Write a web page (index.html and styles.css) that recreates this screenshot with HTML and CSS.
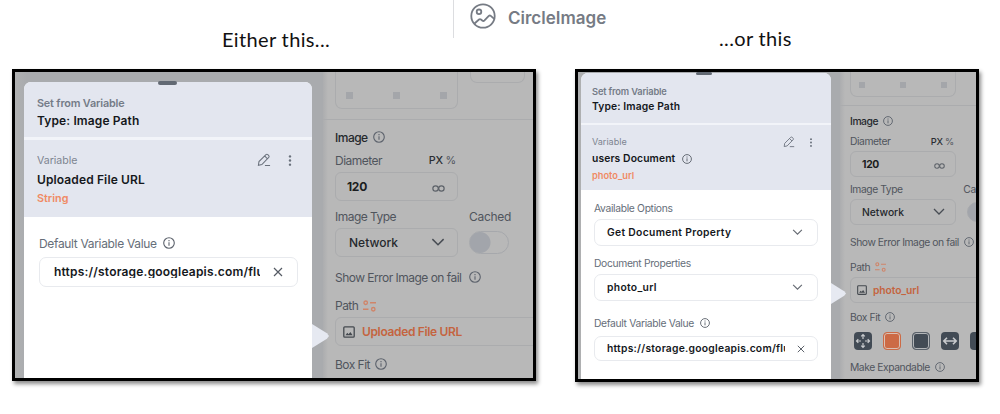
FILE: index.html
```
<!DOCTYPE html>
<html lang="en">
<head>
  <meta charset="UTF-8" />
  <meta name="viewport" content="width=device-width, initial-scale=1.0" />
  <title>CircleImage</title>
  <link rel="stylesheet" href="styles.css">
</head>
<body>
  <svg class="sprite">
    <symbol id="info" viewBox="0 0 12 12"><g fill="none" stroke="currentColor" stroke-width="1.1"><circle cx="6" cy="6" r="5.3"/><path d="M6 5.2v3.6M6 3v1.3"/></g></symbol>
    <symbol id="chevron" viewBox="0 0 12 8"><path d="M1 1l5 5 5-5" fill="none" stroke="currentColor" stroke-width="1.3"/></symbol>
    <symbol id="close" viewBox="0 0 10 10"><path d="M1 1l8 8M9 1L1 9" fill="none" stroke="currentColor" stroke-width="1.2"/></symbol>
    <symbol id="pencil" viewBox="0 0 15 15"><path d="M1.5 13.2l.6-4L9.6 1.7q1-.8 2 0l1 1q.9 1 0 2L5.2 12.4l-3.7.8zM8.2 3.2l3 3M8.5 13.3H14" fill="none" stroke="currentColor" stroke-width="1.1"/></symbol>
    <symbol id="more" viewBox="0 0 4 12"><g fill="currentColor"><circle cx="2" cy="1.5" r="1.3"/><circle cx="2" cy="6" r="1.3"/><circle cx="2" cy="10.5" r="1.3"/></g></symbol>
    <symbol id="infinity" viewBox="0 0 12 8"><g fill="none" stroke="currentColor" stroke-width="1.1"><circle cx="3.3" cy="4" r="2.5"/><circle cx="8.7" cy="4" r="2.5"/></g></symbol>
    <symbol id="binding" viewBox="0 0 12 11"><g fill="none" stroke="currentColor" stroke-width="1.2"><circle cx="2.5" cy="2.5" r="1.6"/><path d="M6.500 2.500H12M0 8.500h5"/><circle cx="9.500" cy="8.500" r="1.600"/></g></symbol>
    <symbol id="picture" viewBox="0 0 12 12"><rect x=".8" y=".8" width="10.400" height="10.400" rx="1" fill="none" stroke="currentColor" stroke-width="1.300"/><path d="M2.500 9.300l1.800-2.500 1.300 1.400 1.800-2.300 2.200 3.400z" fill="currentColor"/></symbol>
    <symbol id="arrows" viewBox="0 0 18 18"><g fill="none" stroke="currentColor" stroke-width="1.200"><path d="M9 2.500V7M9 11v4.500M2.500 9H7M11 9h4.500M7.200 4.300L9 2.500l1.800 1.800M7.200 13.700L9 15.500l1.800-1.800M4.300 7.200L2.500 9l1.800 1.800M13.700 7.200L15.500 9l-1.800 1.800"/></g></symbol>
    <symbol id="width" viewBox="0 0 18 18"><path d="M3 9h12M6 5.800L2.800 9 6 12.200M12 5.800L15.200 9 12 12.200" fill="none" stroke="currentColor" stroke-width="1.600"/></symbol>
  </svg>

  <header class="top">
    <div class="caption caption-left">Either this...</div>
    <div class="widget">
      <svg class="widget-icon" viewBox="0 0 26 26"><g fill="none" stroke="currentColor" stroke-width="1.8"><circle cx="13" cy="13" r="11.7"/><circle cx="9" cy="8.8" r="2.3"/><path d="M4.500 20.500l4.500-4q1-.8 2 0l1.500 1.200q1 .7 2-.3l4.300-4.500q1-.8 2 0l3.400 3"/></g></svg>
      <span>CircleImage</span>
    </div>
    <div class="caption caption-right">...or this</div>
  </header>

  <main class="shots">
    <section class="shot shot-a">
      <div class="sheet">
        <div class="handle"></div>
        <div class="sheet-head">
          <div class="from"><span>Set from Variable</span></div>
          <div class="type"><span>Type: Image Path</span></div>
        </div>
        <div class="variable">
          <div class="variable-text">
            <div class="muted"><span>Variable</span></div>
            <div class="name"><span>Uploaded File URL</span></div>
            <div class="kind"><span>String</span></div>
          </div>
          <div class="actions">
            <svg class="pencil"><use href="#pencil"/></svg>
            <svg class="more"><use href="#more"/></svg>
          </div>
        </div>
        <div class="sheet-body">
          <div class="label default-label"><span>Default Variable Value</span><svg class="info"><use href="#info"/></svg></div>
          <div class="field url-field"><span class="url">https://storage.googleapis.com/flu</span><svg class="close"><use href="#close"/></svg></div>
        </div>
        <div class="pointer"></div>
      </div>

      <div class="props">
        <div class="align">
          <div class="align-box"><i></i><i></i><i></i></div>
          <div class="align-side"></div>
        </div>
        <div class="row title"><span>Image</span><svg class="info"><use href="#info"/></svg></div>
        <div class="row diameter"><span>Diameter</span><span class="units"><b>PX</b> %</span></div>
        <div class="box size"><span>120</span><svg class="infinity"><use href="#infinity"/></svg></div>
        <div class="row type-row"><span class="type-text">Image Type</span><span class="cached">Cached</span></div>
        <div class="type-line">
          <div class="box select"><span>Network</span><svg class="chevron"><use href="#chevron"/></svg></div>
          <div class="switch"></div>
        </div>
        <div class="row fail"><span>Show Error Image on fail</span><svg class="info"><use href="#info"/></svg></div>
        <div class="row path"><span>Path</span><svg class="binding"><use href="#binding"/></svg></div>
        <div class="box path-box"><svg class="picture"><use href="#picture"/></svg><span>Uploaded File URL</span></div>
        <div class="row fit"><span>Box Fit</span><svg class="info"><use href="#info"/></svg></div>
      </div>
    </section>

    <section class="shot shot-b">
      <div class="sheet">
        <div class="handle"></div>
        <div class="sheet-head">
          <div class="from"><span>Set from Variable</span></div>
          <div class="type"><span>Type: Image Path</span></div>
        </div>
        <div class="variable">
          <div class="variable-text">
            <div class="muted"><span>Variable</span></div>
            <div class="name"><span>users Document</span><svg class="info"><use href="#info"/></svg></div>
            <div class="kind"><span>photo_url</span></div>
          </div>
          <div class="actions">
            <svg class="pencil"><use href="#pencil"/></svg>
            <svg class="more"><use href="#more"/></svg>
          </div>
        </div>
        <div class="sheet-body">
          <div class="label"><span>Available Options</span></div>
          <div class="field select-field"><span>Get Document Property</span><svg class="chevron"><use href="#chevron"/></svg></div>
          <div class="label properties-label"><span>Document Properties</span></div>
          <div class="field select-field"><span>photo_url</span><svg class="chevron"><use href="#chevron"/></svg></div>
          <div class="label default-label"><span>Default Variable Value</span><svg class="info"><use href="#info"/></svg></div>
          <div class="field url-field"><span class="url">https://storage.googleapis.com/flu</span><svg class="close"><use href="#close"/></svg></div>
        </div>
        <div class="pointer"></div>
      </div>

      <div class="props">
        <div class="align">
          <div class="align-box"><i></i><i></i><i></i></div>
        </div>
        <div class="row title"><span>Image</span><svg class="info"><use href="#info"/></svg></div>
        <div class="row diameter"><span>Diameter</span><span class="units"><b>PX</b> %</span></div>
        <div class="box size"><span>120</span><svg class="infinity"><use href="#infinity"/></svg></div>
        <div class="row type-row"><span class="type-text">Image Type</span><span class="cached">Ca</span></div>
        <div class="type-line">
          <div class="box select"><span>Network</span><svg class="chevron"><use href="#chevron"/></svg></div>
          <div class="switch"></div>
        </div>
        <div class="row fail"><span>Show Error Image on fail</span><svg class="info"><use href="#info"/></svg></div>
        <div class="row path"><span>Path</span><svg class="binding"><use href="#binding"/></svg></div>
        <div class="box path-box"><svg class="picture"><use href="#picture"/></svg><span>photo_url</span></div>
        <div class="row fit"><span>Box Fit</span><svg class="info"><use href="#info"/></svg></div>
        <div class="fits">
          <div class="fit-btn"><svg><use href="#arrows"/></svg></div>
          <div class="fit-btn ring active"></div>
          <div class="fit-btn ring"></div>
          <div class="fit-btn"><svg><use href="#width"/></svg></div>
          <div class="fit-btn"></div>
        </div>
        <div class="row expand"><span>Make Expandable</span><svg class="info"><use href="#info"/></svg></div>
      </div>
    </section>
  </main>
</body>
</html>
```
FILE: styles.css
```
:root {
  --ink: #15181c;
  --muted: #6f7782;
  --orange: #f08a64;
  --lavender: #e3e6ef;
  --shade: #b8b8b8;
  --shade-line: #abacae;
}

* {
  box-sizing: border-box;
  margin: 0;
  padding: 0;
}

body {
  width: 1000px;
  height: 414px;
  overflow: hidden;
  background: #fff;
  font-family: Inter, 'Liberation Sans', sans-serif;
  color: var(--ink);
}

.sprite {
  display: none;
}

svg {
  display: block;
  flex: none;
}

span {
  white-space: nowrap;
}

/* captions */
.top {
  display: flex;
  height: 69px;
}

.caption {
  font: 20px/24px Lato, sans-serif;
  letter-spacing: 0.35px;
  color: #111;
  white-space: nowrap;
}

.caption-left {
  width: 453px;
  padding: 27px 0 0 222px;
}

.caption-right {
  padding-top: 26px;
}

.widget {
  display: flex;
  align-items: center;
  width: 266px;
  height: 38px;
  padding: 0 0 4px 17px;
  border-left: 1px solid #dcdde0;
  color: #767b84;
  font-size: 17px;
  font-weight: 600;
}

.widget-icon {
  width: 26px;
  height: 26px;
  margin: -2px 12px 0 -1px;
}

.widget span {
  padding-top: 2px;
}

/* screenshots */
.shots {
  display: flex;
  align-items: flex-start;
  gap: 39px;
  padding-left: 12px;
}

.shot {
  display: flex;
  overflow: hidden;
  border: 3px solid #000;
  background: linear-gradient(90deg, #b0b1b2, #a9abae 12px);
  box-shadow: 2px 3px 4px rgba(0, 0, 0, 0.45);
}

.shot-a {
  width: 524px;
  height: 312px;
  padding-left: 9px;
  font-size: 12px;
}

.shot-b {
  width: 404px;
  height: 313px;
  padding-left: 3px;
  font-size: 10.3px;
}

.sheet {
  position: relative;
  flex: none;
  border-radius: 7px 7px 0 0;
  background: #fff;
}

.shot-a .sheet {
  width: 288px;
  margin-top: 10px;
}

.shot-b .sheet {
  width: 250px;
  margin-top: 1px;
}

.handle {
  position: absolute;
  top: -1px;
  left: 50%;
  width: 19px;
  height: 4px;
  margin-left: -10px;
  border-radius: 2px;
  background: #626973;
}

.shot-b .handle {
  width: 16px;
  height: 3px;
}

.pointer {
  position: absolute;
  left: 100%;
  width: 17px;
  height: 24px;
  background: #e6e9f1;
  clip-path: polygon(0 0, 88% 39%, 100% 50%, 88% 61%, 0 100%);
}

.shot-a .pointer {
  top: 242px;
}

.shot-b .pointer {
  top: 210px;
  width: 15px;
  height: 21px;
}

.sheet-head {
  border-bottom: 3px solid #f2f4f9;
  border-radius: 7px 7px 0 0;
  background: var(--lavender);
}

.shot-a .sheet-head {
  height: 58px;
  padding: 13px 13px 0;
  line-height: 17px;
}

.shot-b .sheet-head {
  height: 52px;
  padding: 11px 11px 0;
  border-bottom-width: 2px;
  line-height: 15px;
}

.from {
  color: #747b87;
  font-size: 0.9em;
  font-weight: 600;
  letter-spacing: -0.15px;
}

.type,
.name {
  font-weight: 600;
  letter-spacing: 0.12px;
}

.variable {
  display: flex;
  justify-content: space-between;
  background: var(--lavender);
}

.shot-a .variable {
  height: 77px;
  padding: 11px 20px 0 13px;
  line-height: 19px;
}

.shot-b .variable {
  height: 65px;
  padding: 8px 18px 0 11px;
  line-height: 17px;
}

.name {
  display: flex;
  align-items: center;
  gap: 7px;
}

.muted {
  color: #7d848f;
  font-size: 0.88em;
}

.kind {
  color: var(--orange);
  font-size: 0.9em;
  font-weight: 600;
}

.actions {
  display: flex;
  align-items: center;
  height: 18px;
  color: #6a717c;
}

.pencil {
  width: 14px;
  height: 14px;
  margin-right: 17px;
}

.more {
  width: 4px;
  height: 11px;
}

.shot-b .pencil {
  width: 12px;
  height: 12px;
  margin-right: 14px;
}

.shot-b .more {
  height: 9px;
}

.info {
  width: 12px;
  height: 12px;
  color: #5c626c;
}

.shot-b .info {
  width: 10px;
  height: 10px;
}

.sheet-body {
  padding: 14px 14px 0 15px;
}

.shot-b .sheet-body {
  padding: 8px 13px 0;
}

.label {
  display: flex;
  align-items: center;
  gap: 6px;
  height: 26px;
  padding-bottom: 2px;
  color: #666e79;
  letter-spacing: -0.33px;
}

.shot-b .label {
  height: 21px;
}

.field {
  display: flex;
  align-items: center;
  justify-content: space-between;
  height: 30px;
  padding: 0 14px 0 14px;
  border: 1px solid #e8eaee;
  border-radius: 7px;
  font-weight: 600;
}

.shot-b .field {
  height: 27px;
  padding: 0 14px 1px 12px;
  letter-spacing: 0.33px;
}

.shot-b .properties-label {
  margin-top: 7px;
}

.shot-b .default-label {
  margin-top: 12px;
}

.shot-b .url-field {
  height: 25px;
  margin-top: 2px;
  padding: 0 12px;
}

.field .chevron {
  width: 11px;
  height: 7px;
  color: #666b73;
}

/* the value is cut just below the baseline */
.url {
  width: 206px;
  height: 12px;
  overflow: hidden;
  line-height: 11px;
  letter-spacing: 0.2px;
}

.shot-b .url {
  width: 178px;
  height: 10px;
  line-height: 9px;
  letter-spacing: 0.25px;
}

.close {
  width: 10px;
  height: 10px;
  color: #555b64;
}

.shot-b .close {
  width: 8px;
  height: 8px;
}

/* property panel */
.props {
  flex: 1;
  min-width: 0;
  overflow: hidden;
  background: linear-gradient(90deg, #acadaf, var(--shade) 5px);
  color: #50555d;
}

.shot-a .props {
  margin-left: 11px;
  padding-left: 12px;
}

.shot-b .props {
  margin-left: 9px;
  padding-left: 10px;
}

.align {
  display: flex;
  gap: 12px;
  height: 48px;
  margin-left: -12px;
  padding-left: 12px;
  border-bottom: 1px solid var(--shade-line);
}

.align-box {
  display: flex;
  justify-content: space-between;
  align-items: flex-end;
  width: 123px;
  height: 37px;
  padding: 0 10px 9px;
  border: 1px solid var(--shade-line);
  border-top: 0;
  border-radius: 0 0 7px 7px;
}

.align-box i {
  width: 7px;
  height: 7px;
  background: #a4a6aa;
}

.align-side {
  width: 55px;
  height: 11px;
  border: 1px solid var(--shade-line);
  border-top: 0;
  border-radius: 0 0 7px 7px;
}

.shot-b .align {
  height: 34px;
}

.shot-b .align-box {
  width: 106px;
  height: 25px;
  padding: 0 8px 8px;
}

.shot-b .align-box i {
  width: 6px;
  height: 6px;
}

.row {
  display: flex;
  align-items: center;
  gap: 5px;
  height: 24px;
  letter-spacing: -0.52px;
}

.shot-b .row {
  height: 20px;
  letter-spacing: -0.43px;
}

.title {
  margin-top: 5px;
  color: #25282d;
  font-weight: 500;
}

.row.diameter {
  justify-content: space-between;
  width: 121px;
}

.shot-a .row.diameter {
  height: 22px;
  margin-bottom: 1px;
}

.shot-b .row.diameter {
  width: 104px;
}

.units {
  font-size: 0.9em;
  letter-spacing: -0.2px;
}

.units b {
  color: #2a2d32;
  font-weight: 500;
}

.box {
  display: flex;
  align-items: center;
  width: 123px;
  height: 29px;
  border: 1px solid var(--shade-line);
  border-radius: 6px;
}

.shot-b .box {
  width: 106px;
  height: 26px;
}

.size {
  justify-content: space-between;
  padding: 0 12px 0 11px;
  color: #1b1d20;
  font-weight: 700;
  letter-spacing: -0.3px;
}

.infinity {
  width: 13px;
  height: 9px;
  margin-top: 3px;
  color: #5c6168;
}

.shot-b .infinity {
  width: 11px;
  height: 8px;
}

.shot-b .size {
  padding-right: 10px;
}

.type-row {
  margin-top: 3px;
}

.shot-b .type-row {
  margin-top: 2px;
}

.type-text {
  width: 129px;
}

.shot-b .type-text {
  width: 111px;
}

.row .cached {
  letter-spacing: -0.3px;
}

.type-line {
  display: flex;
  align-items: center;
  gap: 11px;
}

.select {
  flex: none;
  justify-content: space-between;
  padding: 0 12px 0 13px;
  color: #25282d;
  font-weight: 500;
}

.shot-b .select {
  padding: 0 10px 0 11px;
}

.select .chevron {
  width: 14px;
  height: 9px;
  color: #484d54;
}

.shot-b .select .chevron {
  width: 12px;
  height: 8px;
}

.switch {
  flex: none;
  width: 40px;
  height: 23px;
  border: 1px solid #a6a8ac;
  border-radius: 12px;
  background: radial-gradient(circle at 10px 50%, #a2a5ab 10px, transparent 11px);
}

.shot-b .switch {
  height: 20px;
}

.fail {
  margin-top: 8px;
}

.shot-b .fail {
  margin-top: 7px;
}

.shot-a .fail {
  gap: 8px;
}

.path {
  margin-top: 5px;
}

.shot-a .path {
  height: 23px;
}

.binding {
  width: 13px;
  height: 12px;
  color: #d08468;
}

.shot-b .binding {
  width: 11px;
  height: 10px;
}

.shot .path-box {
  width: 240px;
  gap: 7px;
  padding-left: 7px;
  color: #c4643f;
  font-weight: 600;
  letter-spacing: -0.35px;
}

.shot-b .path-box {
  gap: 6px;
  padding-left: 6px;
  letter-spacing: -0.1px;
}

.picture {
  width: 12px;
  height: 12px;
  color: #44494f;
}

.shot-b .picture {
  width: 10px;
  height: 10px;
}

.fit {
  margin-top: 6px;
}

.shot-b .fit {
  margin-top: 4px;
}

.fits {
  display: flex;
  gap: 11px;
  margin-top: 5px;
  padding-left: 4px;
}

.fit-btn {
  flex: none;
  width: 18px;
  height: 18px;
  border-radius: 4px;
  background: #424b55;
  color: #c9cbce;
}

.fit-btn svg {
  width: 18px;
  height: 18px;
}

.ring {
  border: 1.5px solid #59616a;
  box-shadow: inset 0 0 0 1px #b2b5b8;
}

.ring.active {
  border-color: #cc6a45;
  background: #cc6a45;
  box-shadow: inset 0 0 0 1px #d9c0b4;
}

.expand {
  margin-top: 7px;
}
```
